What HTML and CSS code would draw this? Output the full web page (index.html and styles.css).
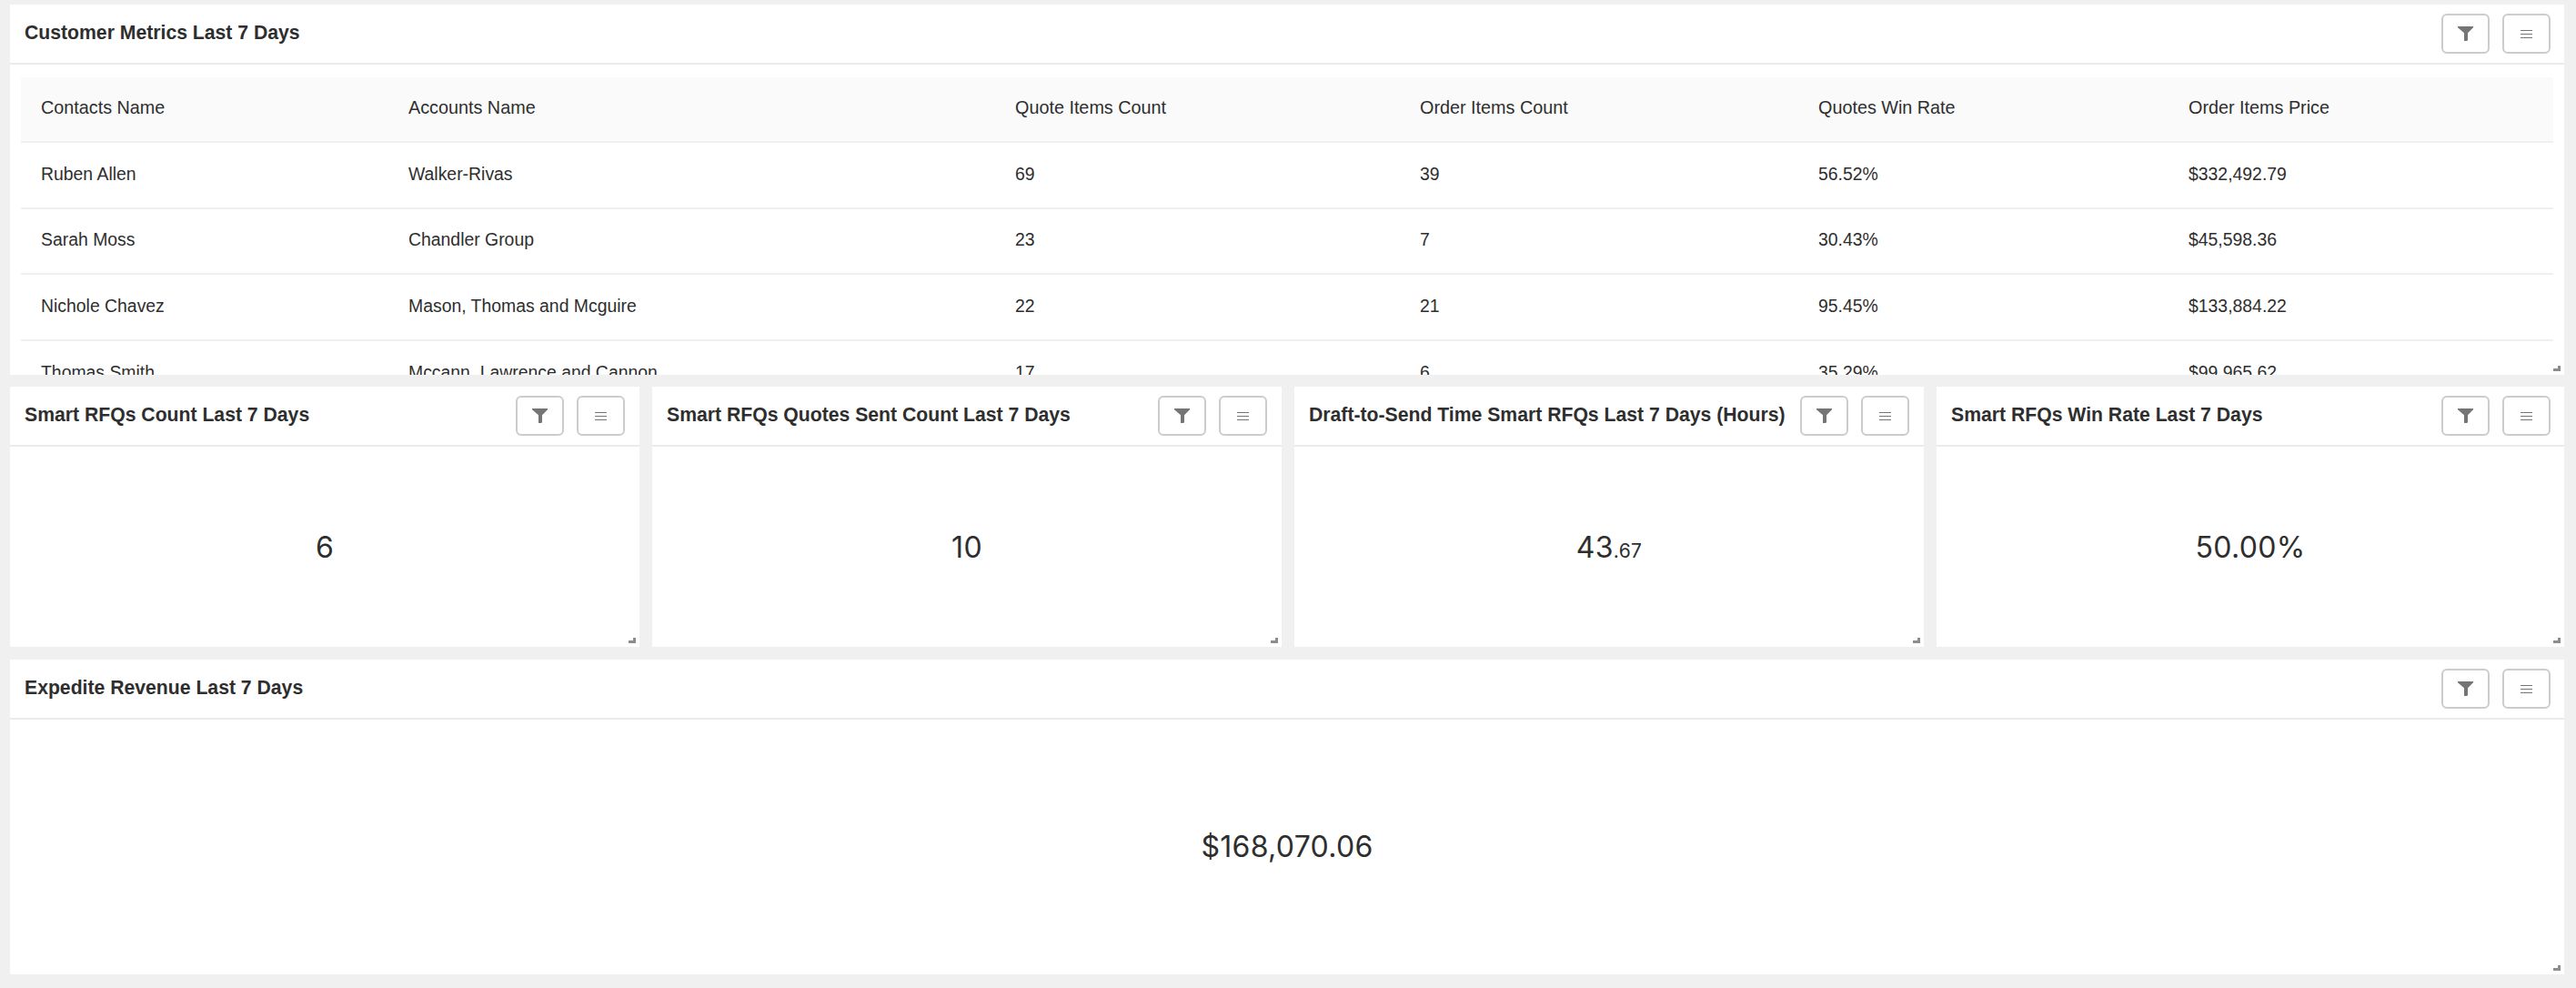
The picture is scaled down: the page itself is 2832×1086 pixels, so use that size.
FILE: index.html
```html
<!DOCTYPE html>
<html lang="en">
<head>
<meta charset="utf-8">
<title>Dashboard</title>
<link rel="stylesheet" href="styles.css">
</head>
<body>
<svg class="defs" width="0" height="0" aria-hidden="true">
  <symbol id="funnel" viewBox="0 0 17 16"><path d="M0 0H17V1.2L11 7.2V15.2L10 16H7V7.2L0 1.2Z"/></symbol>
  <symbol id="bars" viewBox="0 0 13 9"><path d="M0 0H13V1H0ZM0 4H13V5H0ZM0 8H13V9H0Z"/></symbol>
</svg>
<main class="dashboard">
  <section class="panel panel-table">
    <header class="panel-head">
      <h2 class="panel-title">Customer Metrics Last 7 Days</h2>
      <div class="panel-actions">
        <button class="icon-btn"><svg class="icon-funnel"><use href="#funnel"/></svg></button>
        <button class="icon-btn"><svg class="icon-bars"><use href="#bars"/></svg></button>
      </div>
    </header>
    <div class="table-wrap">
      <table class="metrics">
        <colgroup>
          <col class="c1"><col class="c2"><col class="c3"><col class="c4"><col class="c5"><col class="c6">
        </colgroup>
        <thead>
          <tr><th>Contacts Name</th><th>Accounts Name</th><th>Quote Items Count</th><th>Order Items Count</th><th>Quotes Win Rate</th><th>Order Items Price</th></tr>
        </thead>
        <tbody>
          <tr><td>Ruben Allen</td><td>Walker-Rivas</td><td>69</td><td>39</td><td>56.52%</td><td>$332,492.79</td></tr>
          <tr><td>Sarah Moss</td><td>Chandler Group</td><td>23</td><td>7</td><td>30.43%</td><td>$45,598.36</td></tr>
          <tr><td>Nichole Chavez</td><td>Mason, Thomas and Mcguire</td><td>22</td><td>21</td><td>95.45%</td><td>$133,884.22</td></tr>
          <tr><td>Thomas Smith</td><td>Mccann, Lawrence and Cannon</td><td>17</td><td>6</td><td>35.29%</td><td>$99,965.62</td></tr>
        </tbody>
      </table>
    </div>
    <span class="resize"></span>
  </section>

  <div class="kpi-row">
    <section class="panel panel-kpi">
      <header class="panel-head">
        <h2 class="panel-title">Smart RFQs Count Last 7 Days</h2>
        <div class="panel-actions">
          <button class="icon-btn"><svg class="icon-funnel"><use href="#funnel"/></svg></button>
          <button class="icon-btn"><svg class="icon-bars"><use href="#bars"/></svg></button>
        </div>
      </header>
      <div class="value">6</div>
      <span class="resize"></span>
    </section>
    <section class="panel panel-kpi">
      <header class="panel-head">
        <h2 class="panel-title">Smart RFQs Quotes Sent Count Last 7 Days</h2>
        <div class="panel-actions">
          <button class="icon-btn"><svg class="icon-funnel"><use href="#funnel"/></svg></button>
          <button class="icon-btn"><svg class="icon-bars"><use href="#bars"/></svg></button>
        </div>
      </header>
      <div class="value">10</div>
      <span class="resize"></span>
    </section>
    <section class="panel panel-kpi">
      <header class="panel-head">
        <h2 class="panel-title">Draft-to-Send Time Smart RFQs Last 7 Days (Hours)</h2>
        <div class="panel-actions">
          <button class="icon-btn"><svg class="icon-funnel"><use href="#funnel"/></svg></button>
          <button class="icon-btn"><svg class="icon-bars"><use href="#bars"/></svg></button>
        </div>
      </header>
      <div class="value">43<span class="decimals">.67</span></div>
      <span class="resize"></span>
    </section>
    <section class="panel panel-kpi">
      <header class="panel-head">
        <h2 class="panel-title">Smart RFQs Win Rate Last 7 Days</h2>
        <div class="panel-actions">
          <button class="icon-btn"><svg class="icon-funnel"><use href="#funnel"/></svg></button>
          <button class="icon-btn"><svg class="icon-bars"><use href="#bars"/></svg></button>
        </div>
      </header>
      <div class="value">50.00%</div>
      <span class="resize"></span>
    </section>
  </div>

  <section class="panel panel-wide">
    <header class="panel-head">
      <h2 class="panel-title">Expedite Revenue Last 7 Days</h2>
      <div class="panel-actions">
        <button class="icon-btn"><svg class="icon-funnel"><use href="#funnel"/></svg></button>
        <button class="icon-btn"><svg class="icon-bars"><use href="#bars"/></svg></button>
      </div>
    </header>
    <div class="value">$168,070.06</div>
    <span class="resize"></span>
  </section>
</main>
</body>
</html>
```
FILE: styles.css
```css
html, body {
  margin: 0;
  height: 100%;
  background: #f0f0f0;
  color: #2e2e2e;
  font-family: "Liberation Sans", Arial, sans-serif;
}
.defs { position: absolute; }
.dashboard {
  box-sizing: border-box;
  height: 1086px;
  padding: 5px 13px 15px 11px;
  display: flex;
  flex-direction: column;
  gap: 13px;
  overflow: hidden;
}
.panel {
  position: relative;
  background: #fff;
  display: flex;
  flex-direction: column;
  overflow: hidden;
}
.panel-table { height: 407px; flex: none; }
.panel-wide { flex: 1; margin-top: 1px; }
.kpi-row {
  height: 286px;
  flex: none;
  display: grid;
  grid-template-columns: 692px 692px 692px 1fr;
  gap: 14px;
}
.panel-head {
  box-sizing: border-box;
  height: 66px;
  flex: none;
  display: flex;
  align-items: center;
  justify-content: space-between;
  padding: 0 15px 0 16px;
  border-bottom: 2px solid #ebebeb;
}
.panel-kpi:not(:last-child) .panel-head { padding-right: 16px; }
.panel-title {
  margin: 0 0 3px;
  font-size: 21.2px;
  font-weight: 700;
  white-space: nowrap;
}
.panel-actions { display: flex; gap: 14px; margin-left: 14px; }
.icon-btn {
  box-sizing: border-box;
  width: 53px;
  height: 44px;
  padding: 0;
  background: #fff;
  border: 2px solid #cccccc;
  border-radius: 6px;
  display: flex;
  align-items: center;
  justify-content: center;
}
.icon-funnel { width: 17px; height: 16px; fill: #757575; }
.icon-bars { width: 13px; height: 9px; fill: #757575; }
.table-wrap {
  flex: 1;
  margin: 14px 12px 0;
  overflow: hidden;
}
.metrics {
  width: 100%;
  table-layout: fixed;
  border-collapse: separate;
  border-spacing: 0;
  font-size: 19.4px;
}
.c1 { width: 404px; }
.c2 { width: 667px; }
.c3 { width: 445px; }
.c4 { width: 438px; }
.c5 { width: 407px; }
.metrics th, .metrics td {
  box-sizing: border-box;
  height: 72.67px;
  padding: 0 0 2px 22px;
  text-align: left;
  font-weight: 400;
  white-space: nowrap;
  border-bottom: 2px solid #f0f0f0;
}
.metrics th {
  height: 72px;
  padding-bottom: 4px;
  background: #fafafa;
  font-size: 19.8px;
}
.value {
  flex: 1;
  display: flex;
  justify-content: center;
  font-family: Inter, "Liberation Sans", sans-serif;
  font-size: 32px;
  letter-spacing: 0.3px;
  font-weight: 400;
  align-items: baseline;
  line-height: 222px;
}
.panel-wide .value { line-height: 280px; }
.decimals { font-size: 21px; }
.resize {
  position: absolute;
  right: 4px;
  bottom: 4px;
  width: 5px;
  height: 3px;
  border-right: 3px solid #8c8c8c;
  border-bottom: 3px solid #8c8c8c;
}
```
